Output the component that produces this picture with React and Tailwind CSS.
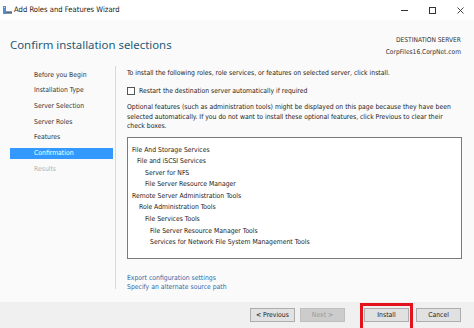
import React from "react";

const F = { fontFamily: '"DejaVu Sans Condensed", "DejaVu Sans", sans-serif' };

function NavItem({ label, active, disabled }) {
  return (
    <div
      className={
        "h-[11px] w-[103px] ml-[10px] pl-[24px] flex items-center text-[6.8px] leading-none " +
        (active ? "bg-[#3399ff] text-white" : disabled ? "text-[#b4b4b4]" : "text-[#333333]")
      }
    >
      {label}
    </div>
  );
}

function TreeLine({ indent, children }) {
  const pad = ["pl-[4px]", "pl-[9px]", "pl-[17px]", "pl-[22px]"][indent];
  const pad2 = indent === 1.5 ? "pl-[11px]" : pad;
  return (
    <div className={"h-[11.6px] flex items-center text-[6.8px] leading-none text-[#222222] " + pad2}>
      {children}
    </div>
  );
}

function Btn({ children, disabled, className = "" }) {
  return (
    <div
      className={
        "h-[14px] w-[45px] flex items-center justify-center text-[6.8px] leading-none border " +
        (disabled
          ? "bg-[#cccccc] border-[#bfbfbf] text-[#9a9a9a]"
          : "bg-[#e1e1e1] border-[#adadad] text-[#222222]") +
        " " +
        className
      }
    >
      {children}
    </div>
  );
}

export default function App() {
  return (
    <div className="w-[474px] h-[328px] overflow-hidden flex flex-col bg-white" style={F}>
      {/* Title bar */}
      <div className="h-[20px] flex items-center bg-white shrink-0">
        <svg width="9" height="8" viewBox="0 0 9 8" className="ml-[3px]">
          <rect x="0" y="0" width="3" height="8" fill="#4a8fd4" />
          <rect x="1" y="1" width="1" height="1" fill="#cfe4f7" />
          <rect x="3" y="5" width="6" height="3" fill="#8a9aa8" />
          <rect x="3" y="6" width="6" height="1" fill="#5b6b78" />
        </svg>
        <span className="ml-[2px] text-[7.6px] leading-none text-[#222222]">
          Add Roles and Features Wizard
        </span>
        <div className="ml-auto flex items-center h-full">
          <div className="w-[28px] h-full flex items-center justify-center">
            <div className="w-[7px] h-px bg-[#333333]" />
          </div>
          <div className="w-[28px] h-full flex items-center justify-center">
            <div className="w-[7px] h-[7px] border border-[#333333]" />
          </div>
          <div className="w-[28px] h-full flex items-center justify-center">
            <svg width="7" height="7" viewBox="0 0 7 7">
              <path d="M0.5 0.5L6.5 6.5M6.5 0.5L0.5 6.5" stroke="#333333" strokeWidth="0.9" />
            </svg>
          </div>
        </div>
      </div>

      {/* Body */}
      <div className="flex-1 flex flex-col bg-[#fafafa]">
        {/* Header */}
        <div className="h-[42px] shrink-0 flex items-start justify-between px-[10px]">
          <div className="mt-[19px] text-[11.4px] leading-none text-[#1f5a76]" style={{ fontFamily: '"Noto Sans", "Open Sans", sans-serif' }}>
            Confirm installation selections
          </div>
          <div className="mt-[14px] mr-[3px] flex flex-col items-end text-[6.6px] leading-[12px] text-[#333333]">
            <div>DESTINATION SERVER</div>
            <div>CorpFiles16.CorpNet.com</div>
          </div>
        </div>

        {/* Main */}
        <div className="flex-1 flex">
          <div className="w-[115px] shrink-0 pt-[7.5px] flex flex-col gap-[4.67px] relative">
            <NavItem label="Before you Begin" />
            <NavItem label="Installation Type" />
            <NavItem label="Server Selection" />
            <NavItem label="Server Roles" />
            <NavItem label="Features" />
            <NavItem label="Confirmation" active />
            <NavItem label="Results" disabled />
          </div>
          <div className="w-px bg-[#d9d9d9] mt-[4px] h-[223px]" />
          <div className="flex-1 pl-[11px] pr-[12px] flex flex-col">
            <div className="mt-[7px] h-[8px] flex items-center text-[6.8px] leading-none text-[#222222]">
              To install the following roles, role services, or features on selected server, click install.
            </div>
            <div className="mt-[10px] flex items-center h-[8px]">
              <div className="w-[8px] h-[8px] border border-[#555555] bg-white" />
              <span className="ml-[4px] text-[6.8px] leading-none text-[#222222]">
                Restart the destination server automatically if required
              </span>
            </div>
            <div className="mt-[8px] text-[6.8px] leading-[9.7px] text-[#222222]">
              Optional features (such as administration tools) might be displayed on this page because they have been
              selected automatically. If you do not want to install these optional features, click Previous to clear their
              check boxes.
            </div>
            <div className="mt-[5px] h-[122px] border border-[#7a7a7a] bg-white pt-[6px]">
              <TreeLine indent={0}>File And Storage Services</TreeLine>
              <TreeLine indent={1}>File and iSCSI Services</TreeLine>
              <TreeLine indent={2}>Server for NFS</TreeLine>
              <TreeLine indent={2}>File Server Resource Manager</TreeLine>
              <TreeLine indent={0}>Remote Server Administration Tools</TreeLine>
              <TreeLine indent={1.5}>Role Administration Tools</TreeLine>
              <TreeLine indent={2}>File Services Tools</TreeLine>
              <TreeLine indent={3}>File Server Resource Manager Tools</TreeLine>
              <TreeLine indent={3}>Services for Network File System Management Tools</TreeLine>
            </div>
            <div className="mt-[15px] flex flex-col text-[6.8px] leading-[9px] text-[#2f6aa8]">
              <span>Export configuration settings</span>
              <span>Specify an alternate source path</span>
            </div>
          </div>
        </div>

        {/* Footer */}
        <div className="h-[26px] shrink-0 bg-[#f0f0f0] flex items-start pt-[6px] pl-[250px]">
          <Btn>&lt; Previous</Btn>
          <Btn disabled className="ml-[5px]">Next &gt;</Btn>
          <div className="relative ml-[19px]">
            <Btn>Install</Btn>
            <div className="absolute left-[-4px] right-[-4px] top-[-5px] bottom-[-10px] border-[3px] border-[#e4121c]" />
          </div>
          <Btn className="ml-[7px]">Cancel</Btn>
        </div>
      </div>
    </div>
  );
}
